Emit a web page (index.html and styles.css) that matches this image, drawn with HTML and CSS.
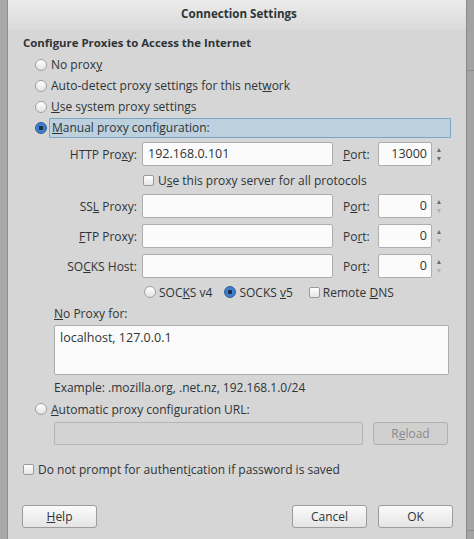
FILE: index.html
```html
<!DOCTYPE html>
<html>
<head>
<meta charset="utf-8">
<link rel="stylesheet" href="styles.css">
</head>
<body>
<div class="desk">
  <div class="dialog">
    <div class="titlebar">Connection Settings</div>
    <div class="content">
      <div class="heading">Configure Proxies to Access the Internet</div>
      <div class="radios">
        <div class="radio-row"><span class="radio"></span><span class="lbl">No prox<u>y</u></span></div>
        <div class="radio-row"><span class="radio"></span><span class="lbl">Auto-detect proxy settings for this net<u>w</u>ork</span></div>
        <div class="radio-row"><span class="radio"></span><span class="lbl"><u>U</u>se system proxy settings</span></div>
        <div class="radio-row"><span class="radio on"></span><span class="lbl focus"><u>M</u>anual proxy configuration:</span></div>
      </div>

      <div class="proxy-grid">
        <div class="plabel">HTTP Pro<u>x</u>y:</div>
        <div class="entry">192.168.0.101</div>
        <div class="portlabel"><u>P</u>ort:</div>
        <div class="spin"><div class="entry num">13000</div><div class="arrows"><span class="up"></span><span class="down"></span></div></div>

        <div class="checkrow"><span class="check"></span><span>U<u>s</u>e this proxy server for all protocols</span></div>

        <div class="plabel">SS<u>L</u> Proxy:</div>
        <div class="entry"></div>
        <div class="portlabel">P<u>o</u>rt:</div>
        <div class="spin"><div class="entry num">0</div><div class="arrows"><span class="up"></span><span class="down dis"></span></div></div>

        <div class="plabel"><u>F</u>TP Proxy:</div>
        <div class="entry"></div>
        <div class="portlabel">Po<u>r</u>t:</div>
        <div class="spin"><div class="entry num">0</div><div class="arrows"><span class="up"></span><span class="down dis"></span></div></div>

        <div class="plabel">SO<u>C</u>KS Host:</div>
        <div class="entry"></div>
        <div class="portlabel">Por<u>t</u>:</div>
        <div class="spin"><div class="entry num">0</div><div class="arrows"><span class="up"></span><span class="down dis"></span></div></div>

        <div class="socks">
          <span class="opt"><span class="radio"></span><span>SOC<u>K</u>S v4</span></span>
          <span class="opt"><span class="radio on"></span><span>SOCKS <u>v</u>5</span></span>
          <span class="opt dns"><span class="check"></span><span>Remote <u>D</u>NS</span></span>
        </div>
      </div>

      <div class="sub">
        <div class="noproxy-label"><u>N</u>o Proxy for:</div>
        <div class="textarea">localhost, 127.0.0.1</div>
        <div class="example">Example: .mozilla.org, .net.nz, 192.168.1.0/24</div>
      </div>

      <div class="radio-row auto"><span class="radio"></span><span class="lbl"><u>A</u>utomatic proxy configuration URL:</span></div>
      <div class="url-row">
        <div class="entry disabled"></div>
        <div class="button disabled">R<u>e</u>load</div>
      </div>

      <div class="checkrow prompt"><span class="check"></span><span>Do not prompt for authent<u>i</u>cation if password is saved</span></div>

      <div class="buttons">
        <div class="button"><u>H</u>elp</div>
        <div class="spacer"></div>
        <div class="button">Cancel</div>
        <div class="button">OK</div>
      </div>
    </div>
  </div>
  <div class="rightstrip"><div class="rs-line a"></div><div class="rs-line b"></div></div>
</div>
</body>
</html>
```

FILE: styles.css
```css
* { box-sizing: border-box; }
html, body { margin: 0; padding: 0; }
body {
  width: 474px;
  height: 539px;
  overflow: hidden;
  background: #a9a9a9;
  font-family: "Open Sans", "DejaVu Sans", sans-serif;
  font-size: 12px;
  color: #2e3436;
}
u { text-decoration: underline; text-underline-offset: 1px; }
.desk {
  display: flex;
  height: 539px;
  padding-left: 7px;
}
.dialog {
  width: 459px;
  height: 539px;
  background: #d6d6d6;
  border-left: 1px solid #8f8f8f;
  display: flex;
  flex-direction: column;
}
.titlebar {
  height: 30px;
  flex: none;
  background: linear-gradient(#ebebeb, #dadada);
  font-weight: bold;
  text-align: center;
  line-height: 27px;
  font-size: 11.6px;
  padding-left: 4px;
}
.content {
  padding: 4px 0 0 15px;
  display: flex;
  flex-direction: column;
}
.heading {
  font-weight: bold;
  font-size: 11.4px;
  line-height: 18px;
  height: 18px;
}
.radios { margin-top: 2px; display: flex; flex-direction: column; }
.radio-row {
  height: 21px;
  display: flex;
  align-items: center;
  padding-left: 12px;
}
.radio {
  width: 12px;
  height: 12px;
  border-radius: 50%;
  border: 1px solid #a0a0a0;
  background: linear-gradient(#ffffff, #e2e2e2);
  flex: none;
  margin-right: 4px;
}
.radio.on {
  background: radial-gradient(circle, #1d2f44 0 2px, #3d7fc9 2.5px);
  border-color: #2a5c95;
}
.lbl { padding: 1px 2px; margin-left: -2px; }
.lbl.focus {
  width: 402px;
  height: 20px;
  line-height: 16px;
  background: #bcd0de;
  border: 1px solid #79a6c4;
  border-radius: 1px;
}
.proxy-grid {
  margin-top: 4px;
  display: grid;
  grid-template-columns: 119px 191px 45px 54px 14px;
  row-gap: 6px;
  align-items: center;
}
.plabel {
  grid-column: 1;
  text-align: right;
  padding-right: 5px;
}
.proxy-grid > .entry { grid-column: 2; }
.entry {
  height: 24px;
  background: #fbfbfb;
  border: 1px solid #aeaeae;
  border-radius: 2px;
  padding: 0 5px;
  line-height: 22px;
  font-size: 12.5px;
}
.entry.num { text-align: right; padding-right: 4px; width: 54px; }
.entry.disabled { background: #d3d3d3; border-color: #b5b5b5; }
.portlabel { grid-column: 3; padding-left: 10px; }
.spin { grid-column: 4 / 6; display: flex; align-items: center; }
.arrows {
  width: 14px;
  display: flex;
  flex-direction: column;
  align-items: center;
  gap: 5px;
}
.up, .down { width: 0; height: 0; border-left: 2.5px solid transparent; border-right: 2.5px solid transparent; }
.up { border-bottom: 4px solid #6b6b6b; }
.down { border-top: 4px solid #6b6b6b; }
.down.dis { border-top-color: #b0b0b0; }
.checkrow {
  display: flex;
  align-items: center;
  height: 16px;
}
.proxy-grid > .checkrow { grid-column: 2 / 6; padding-left: 1px; }
.check {
  width: 11px;
  height: 11px;
  border: 1px solid #9a9a9a;
  border-radius: 2px;
  background: linear-gradient(#ffffff, #e6e6e6);
  margin-right: 4px;
  flex: none;
}
.socks {
  grid-column: 2 / 6;
  display: flex;
  align-items: center;
  height: 16px;
  padding-left: 2px;
  gap: 12px;
}
.opt { display: flex; align-items: center; }
.opt .radio { margin-right: 3px; }
.opt .check { margin-right: 3px; }
.opt.dns { margin-left: 4px; }
.sub { padding-left: 31px; display: flex; flex-direction: column; margin-top: 6px; }
.noproxy-label { height: 16px; line-height: 16px; }
.textarea {
  margin-top: 3px;
  width: 395px;
  height: 50px;
  background: #fbfbfb;
  border: 1px solid #aeaeae;
  border-radius: 2px;
  padding: 3px 5px;
  font-size: 12.5px;
}
.example { margin-top: 5px; height: 16px; line-height: 16px; }
.radio-row.auto { margin-top: 3px; height: 20px; }
.url-row {
  margin-top: 3px;
  padding-left: 31px;
  display: flex;
  gap: 10px;
}
.url-row .entry { width: 309px; height: 23px; }
.button {
  width: 75px;
  height: 23px;
  border: 1px solid #9c9c9c;
  border-radius: 3px;
  background: linear-gradient(#fbfbfb, #e4e4e4);
  display: flex;
  align-items: center;
  justify-content: center;
  font-size: 12px;
}
.button.disabled {
  background: #d0d0d0;
  border-color: #b0b0b0;
  color: #8a8a8a;
}
.checkrow.prompt { margin-top: 16px; }
.buttons {
  margin-top: 28px;
  display: flex;
  margin-left: -1px;
  width: 431px;
  gap: 11px;
}
.spacer { flex: 1; }
.rightstrip {
  width: 8px;
  height: 539px;
  background: #a3a3a3;
  border-left: 1px solid #8a8a8a;
  display: flex;
  flex-direction: column;
}
.rs-line { height: 1px; background: #8c8c8c; }
.rs-line.a { margin-top: 70px; }
.rs-line.b { margin-top: 459px; }
```
